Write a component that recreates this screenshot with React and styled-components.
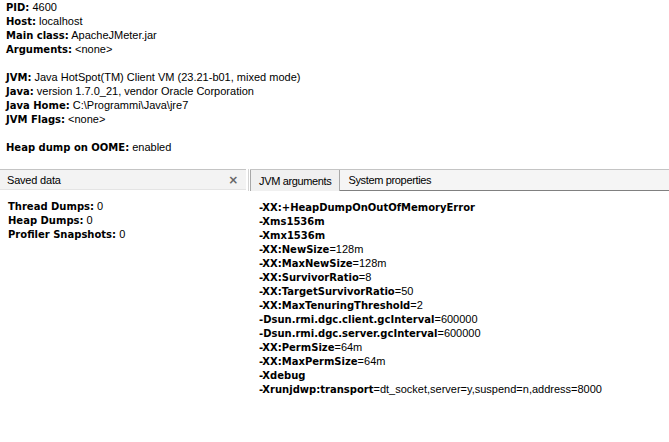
import React from 'react';
import styled, { createGlobalStyle } from 'styled-components';

const GlobalStyle = createGlobalStyle`
  html, body {
    margin: 0;
    padding: 0;
    background: #ffffff;
  }
  body {
    font-family: "Liberation Sans", Arial, sans-serif;
    font-size: 11px;
    color: #000000;
  }
`;

const StyledPage = styled.div`
  width: 669px;
  height: 442px;
  display: flex;
  flex-direction: column;
  overflow: hidden;
`;

const StyledOverview = styled.div`
  padding: 0 6px;
  display: flex;
  flex-direction: column;
  gap: 14px;
`;

const StyledGroup = styled.div`
  display: flex;
  flex-direction: column;
`;

const StyledLine = styled.div`
  height: 14px;
  line-height: 14px;
  white-space: nowrap;
`;

const StyledKey = styled.span`
  font-family: "DejaVu Sans", Verdana, sans-serif;
  font-weight: bold;
  font-size: 10px;
`;

const StyledSplit = styled.div`
  margin-top: 15px;
  flex: 1;
  display: grid;
  grid-template-columns: 246px 4px 1fr;
`;

const StyledColumn = styled.div`
  display: flex;
  flex-direction: column;
`;

const StyledDivider = styled.div`
  display: flex;
  justify-content: center;
  &::before {
    content: '';
    width: 1px;
    height: 22px;
    background: #d4d4d4;
  }
`;

const StyledPanelHeader = styled.div`
  height: 21px;
  box-sizing: border-box;
  border-top: 1px solid #c4c4c4;
  border-bottom: 1px solid #e4e4e4;
  background: #f3f3f3;
  display: flex;
  align-items: center;
  justify-content: space-between;
  padding: 0 8px 0 7px;
  letter-spacing: -0.2px;
`;

const StyledClose = styled.span`
  color: #666666;
  font-family: "DejaVu Sans", sans-serif;
  font-weight: bold;
  font-size: 12px;
  line-height: 1;
`;

const StyledTabs = styled.div`
  height: 22px;
  display: flex;
  box-sizing: border-box;
  border-top: 1px solid #c4c4c4;
`;

const StyledTab = styled.div`
  box-sizing: border-box;
  height: 21px;
  display: flex;
  align-items: center;
  padding: 0 8px;
  white-space: nowrap;
  letter-spacing: -0.35px;
  background: ${({ active }) => (active ? '#f0f0f0' : '#f5f5f5')};
  border-left: ${({ active }) => (active ? '1px solid #a8a8a8' : 'none')};
  border-right: ${({ active }) => (active ? '1px solid #a8a8a8' : 'none')};
  border-bottom: ${({ active }) => (active ? 'none' : '1px solid #808080')};
  flex: ${({ grow }) => (grow ? 1 : '0 0 auto')};
`;

const StyledContent = styled.div`
  padding: ${({ right }) => (right ? '9px 8px 0 9px' : '9px 8px 0 8px')};
  display: flex;
  flex-direction: column;
`;

const overview = [
  [
    ['PID:', '4600'],
    ['Host:', 'localhost'],
    ['Main class:', 'ApacheJMeter.jar'],
    ['Arguments:', '<none>'],
  ],
  [
    ['JVM:', 'Java HotSpot(TM) Client VM (23.21-b01, mixed mode)'],
    ['Java:', 'version 1.7.0_21, vendor Oracle Corporation'],
    ['Java Home:', 'C:\\Programmi\\Java\\jre7'],
    ['JVM Flags:', '<none>'],
  ],
  [['Heap dump on OOME:', 'enabled']],
];

const savedData = [
  ['Thread Dumps:', '0'],
  ['Heap Dumps:', '0'],
  ['Profiler Snapshots:', '0'],
];

const jvmArgs = [
  ['-XX:+HeapDumpOnOutOfMemoryError', ''],
  ['-Xms1536m', ''],
  ['-Xmx1536m', ''],
  ['-XX:NewSize', '=128m'],
  ['-XX:MaxNewSize', '=128m'],
  ['-XX:SurvivorRatio', '=8'],
  ['-XX:TargetSurvivorRatio', '=50'],
  ['-XX:MaxTenuringThreshold', '=2'],
  ['-Dsun.rmi.dgc.client.gcInterval', '=600000'],
  ['-Dsun.rmi.dgc.server.gcInterval', '=600000'],
  ['-XX:PermSize', '=64m'],
  ['-XX:MaxPermSize', '=64m'],
  ['-Xdebug', ''],
  ['-Xrunjdwp:transport', '=dt_socket,server=y,suspend=n,address=8000'],
];

const App = () => (
  <StyledPage>
    <GlobalStyle />
    <StyledOverview>
      {overview.map((group, i) => (
        <StyledGroup key={i}>
          {group.map(([key, value]) => (
            <StyledLine key={key}>
              <StyledKey>{key}</StyledKey> {value}
            </StyledLine>
          ))}
        </StyledGroup>
      ))}
    </StyledOverview>
    <StyledSplit>
      <StyledColumn>
        <StyledPanelHeader>
          Saved data
          <StyledClose>×</StyledClose>
        </StyledPanelHeader>
        <StyledContent>
          {savedData.map(([key, value]) => (
            <StyledLine key={key}>
              <StyledKey>{key}</StyledKey> {value}
            </StyledLine>
          ))}
        </StyledContent>
      </StyledColumn>
      <StyledDivider />
      <StyledColumn>
        <StyledTabs>
          <StyledTab active>JVM arguments</StyledTab>
          <StyledTab grow>System properties</StyledTab>
        </StyledTabs>
        <StyledContent right>
          {jvmArgs.map(([key, value]) => (
            <StyledLine key={key}>
              <StyledKey>{key}</StyledKey>
              {value}
            </StyledLine>
          ))}
        </StyledContent>
      </StyledColumn>
    </StyledSplit>
  </StyledPage>
);

export default App;
